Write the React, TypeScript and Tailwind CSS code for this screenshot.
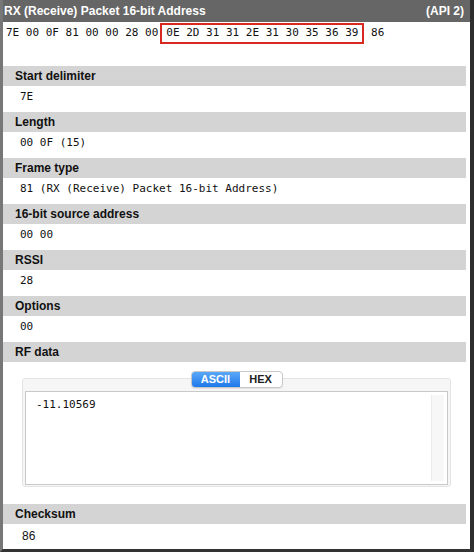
const mono = "font-['DejaVu_Sans_Mono',monospace]";
const sans = "font-['Liberation_Sans',Arial,sans-serif]";

const fields: { label: string; value: string }[] = [
  { label: "Start delimiter", value: "7E" },
  { label: "Length", value: "00 0F (15)" },
  { label: "Frame type", value: "81 (RX (Receive) Packet 16-bit Address)" },
  { label: "16-bit source address", value: "00 00" },
  { label: "RSSI", value: "28" },
  { label: "Options", value: "00" },
];

function Bar({ label }: { label: string }) {
  return (
    <div className={`mr-[4px] flex h-[20px] items-center bg-[#d4d4d4] pl-[12px] text-[12px] font-bold text-[#111] ${sans}`}>
      {label}
    </div>
  );
}

export default function App() {
  return (
    <div className="flex h-[552px] w-[474px] flex-col overflow-hidden border-b-[3px] border-l-[3px] border-r-[4px] border-b-[#333] border-l-[#777] border-r-[#2e2e2e] bg-white">
      <div className={`-ml-[3px] flex h-[22px] shrink-0 items-center justify-between bg-[#666] pl-[4px] pr-[6px] text-[12px] font-bold text-white ${sans}`}>
        <span>RX (Receive) Packet 16-bit Address</span>
        <span>(API 2)</span>
      </div>
      <div className={`flex h-[22px] items-center pl-[3px] text-[11px] text-[#111] ${mono}`}>
        <span className="whitespace-pre">7E 00 0F 81 00 00 28 00</span>
        <span className="ml-[2px] flex h-[21px] items-center whitespace-pre border-[2px] border-[#d8281f] px-[4px]">
          0E 2D 31 31 2E 31 30 35 36 39
        </span>
        <span className="whitespace-pre"> 86</span>
      </div>
      <div className="h-[22px]" />
      {fields.map((f) => (
        <div key={f.label} className="mb-[4px]">
          <Bar label={f.label} />
          <div className={`flex h-[22px] items-center pl-[17px] text-[11px] text-[#111] ${mono}`}>{f.value}</div>
        </div>
      ))}
      <Bar label="RF data" />
      <div className="relative mx-[19px] mb-[17px] mt-[16px] h-[109px] rounded-[3px] border border-[#e4e4e4] bg-[#f6f6f6] px-[2px] pb-[1px] pt-[12px]">
        <div className={`absolute left-1/2 top-[-8px] flex h-[17px] -translate-x-1/2 overflow-hidden rounded-[4px] border border-[#c8c8c8] bg-white text-[11px] font-bold shadow-[0_1px_1px_rgba(0,0,0,0.08)] ${sans}`}>
          <span className="flex w-[48px] items-center justify-center bg-gradient-to-b from-[#5aa8f7] to-[#1c78ea] text-white">ASCII</span>
          <span className="flex w-[42px] items-center justify-center text-[#222]">HEX</span>
        </div>
        <div className="flex h-full border border-[#c9c9c9] bg-white">
          <div className={`flex-1 pl-[10px] pt-[5px] text-[11px] text-[#111] ${mono}`}>-11.10569</div>
          <div className="my-[3px] mr-[3px] w-[13px] border-l border-[#ececec] bg-[#f7f7f7]" />
        </div>
      </div>
      <Bar label="Checksum" />
      <div className={`flex h-[24px] items-center pl-[19px] text-[12px] text-[#111] ${sans}`}>86</div>
    </div>
  );
}
